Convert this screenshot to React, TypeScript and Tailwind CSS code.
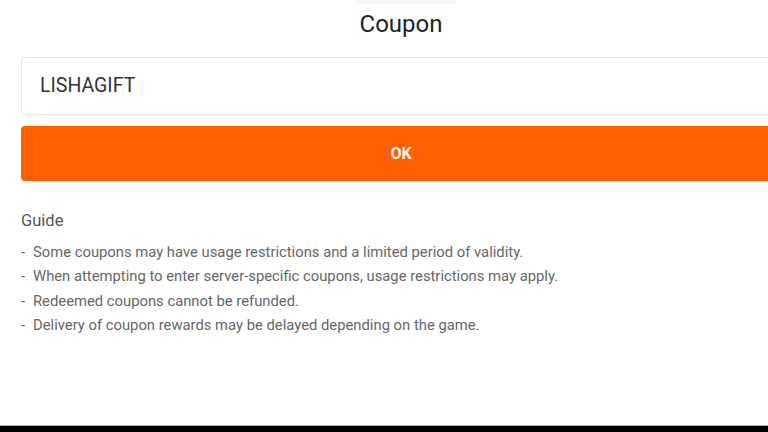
import React from "react";

export default function App() {
  const items = [
    "Some coupons may have usage restrictions and a limited period of validity.",
    "When attempting to enter server-specific coupons, usage restrictions may apply.",
    "Redeemed coupons cannot be refunded.",
    "Delivery of coupon rewards may be delayed depending on the game.",
  ];
  return (
    <div className="w-[768px] h-[432px] overflow-hidden bg-white flex flex-col" style={{ fontFamily: "Roboto, 'Noto Sans', sans-serif" }}>
      <div className="w-[802px] flex-1 px-[21px] flex flex-col relative">
        <div className="absolute left-[356px] top-0 w-[100px] h-[4px] rounded-b bg-[#f6f6f6]" />
        <div className="h-[46px] flex items-center justify-center text-[24px] text-[#222] leading-none pt-[1px]">Coupon</div>
        <div className="mt-[11px] h-[58px] border border-[#e3e3e6] rounded-[4px] flex items-center pl-[18px] text-[19.5px] text-[#333]">
          LISHAGIFT
        </div>
        <div className="mt-[11px] h-[55px] rounded-[4px] bg-[#ff5f00] flex items-center justify-center text-[#fff4ec] font-bold text-[16px]">
          OK
        </div>
        <div className="mt-[29px] text-[16.5px] text-[#555] leading-[22px]">Guide</div>
        <div className="mt-[8px] flex flex-col text-[14.8px] text-[#666] leading-[24.3px]">
          {items.map((t) => (
            <div key={t} className="flex">
              <span className="w-[12px] shrink-0">-</span>
              <span>{t}</span>
            </div>
          ))}
        </div>
      </div>
      <div className="h-[7px] bg-black border-t border-[#aaa]" />
    </div>
  );
}
